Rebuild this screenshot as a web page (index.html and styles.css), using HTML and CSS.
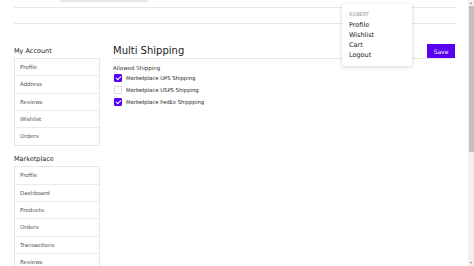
FILE: index.html
```html
<!DOCTYPE html>
<html>
<head>
	<title>Multi Shipping</title>
	<meta charset="utf-8">
	<link rel="stylesheet" href="styles.css">
</head>
<body>

<div id="wrapper">
	<div class="top">
		<div class="search_stub"></div>
	</div>
	<div class="navbar"></div>

	<div class="content">
		<div class="sidebar">
			<div class="side_title">My Account</div>
			<ul class="side_list">
				<li>Profile</li>
				<li>Address</li>
				<li>Reviews</li>
				<li>Wishlist</li>
				<li>Orders</li>
			</ul>
			<div class="side_title">Marketplace</div>
			<ul class="side_list">
				<li>Profile</li>
				<li>Dashboard</li>
				<li>Products</li>
				<li>Orders</li>
				<li>Transactions</li>
				<li>Reviews</li>
			</ul>
		</div>

		<div class="main">
			<div class="main_head">
				<h1>Multi Shipping</h1>
				<button class="btn" type="button">Save</button>
			</div>
			<div class="field_label">Allowed Shipping</div>
			<label class="check_row"><span class="box checked"></span>Marketplace UPS Shipping</label>
			<label class="check_row"><span class="box"></span>Marketplace USPS Shipping</label>
			<label class="check_row"><span class="box checked"></span>Marketplace FedEx Shippping</label>
		</div>
	</div>
</div>

<div class="dropdown">
	<div class="dd_name">ROBERT</div>
	<div class="dd_item">Profile</div>
	<div class="dd_item">Wishlist</div>
	<div class="dd_item">Cart</div>
	<div class="dd_item">Logout</div>
</div>

<div class="scrollbar">
	<div class="sb_arrow up"></div>
	<div class="sb_thumb"></div>
	<div class="sb_arrow down"></div>
</div>

</body>
</html>
```

FILE: styles.css
```css
html{
	overflow: hidden;
}
body {
	margin: 0;
	font-family: "DejaVu Sans", sans-serif;
	color: #222;
	background: #fff;
}
#wrapper{
	margin-right: 6px;
	padding: 0 13px 0 14px;
}
.top{
	height: 7px;
}
.search_stub{
	margin-left: 46px;
	width: 88px;
	height: 2px;
	background: #e9e9e9;
}
.navbar{
	height: 15px;
	border-top: 1px solid #e6e6e6;
	border-bottom: 1px solid #e6e6e6;
}
.content{
	display: flex;
	gap: 13px;
	padding-top: 20px;
}
.sidebar{
	width: 86px;
	flex-shrink: 0;
}
.side_title{
	font-size: 6.5px;
	color: #222;
	line-height: 9px;
	margin: 2.5px 0;
}
.side_list{
	list-style: none;
	margin: 0 0 8.5px 0;
	padding: 0;
	border: 1px solid #e6e6e6;
}
.side_list li{
	font-size: 5.5px;
	color: #555;
	height: 17.3px;
	line-height: 16.3px;
	box-sizing: border-box;
	padding-left: 5px;
	border-bottom: 1px solid #ececec;
}
.side_list li:last-child{
	border-bottom: none;
}
.main{
	flex: 1;
}
.main_head{
	display: flex;
	justify-content: space-between;
	align-items: flex-end;
	border-bottom: 1px solid #e6e6e6;
	height: 14px;
}
.main_head h1{
	margin: 0;
	font-size: 10px;
	font-weight: normal;
	line-height: 14px;
}
.btn{
	background: #5a00f0;
	color: #fff;
	border: none;
	font-family: inherit;
	font-size: 6px;
	width: 28px;
	height: 14px;
	padding: 0;
}
.field_label{
	font-size: 5.5px;
	color: #333;
	line-height: 7px;
	margin-top: 6px;
}
.check_row{
	display: flex;
	align-items: center;
	gap: 4px;
	font-size: 5.3px;
	color: #222;
	height: 12px;
}
.box{
	width: 8px;
	height: 8px;
	margin-left: 1px;
	border: 1px solid #ddd;
	border-radius: 1px;
	box-sizing: border-box;
}
.box.checked{
	border-color: #5a00f0;
	background: #5a00f0;
	position: relative;
}
.box.checked::after{
	content: "";
	position: absolute;
	left: 2.3px;
	top: 0.4px;
	width: 2px;
	height: 4px;
	border-right: 1.2px solid #fff;
	border-bottom: 1.2px solid #fff;
	transform: rotate(45deg);
}
.dropdown{
	position: absolute;
	top: 4px;
	left: 342px;
	width: 70px;
	height: 62px;
	box-sizing: border-box;
	padding: 7px 7px;
	background: #fff;
	border-radius: 2px;
	box-shadow: 0 1px 4px rgba(0,0,0,0.18);
}
.dd_name{
	font-size: 5px;
	color: #999;
	height: 10px;
	line-height: 6px;
}
.dd_item{
	font-size: 6.5px;
	color: #222;
	height: 10px;
	line-height: 8px;
}
.scrollbar{
	position: fixed;
	top: 0;
	right: 0;
	width: 6px;
	height: 100vh;
	background: #f1f1f1;
	display: flex;
	flex-direction: column;
	align-items: center;
}
.sb_arrow{
	width: 0;
	height: 0;
	border-left: 1.5px solid transparent;
	border-right: 1.5px solid transparent;
	margin: 2px 0;
}
.sb_arrow.up{
	border-bottom: 2px solid #888;
}
.sb_arrow.down{
	border-top: 2px solid #888;
	margin-top: auto;
}
.sb_thumb{
	width: 5px;
	height: 146px;
	background: #c1c1c1;
}
```
